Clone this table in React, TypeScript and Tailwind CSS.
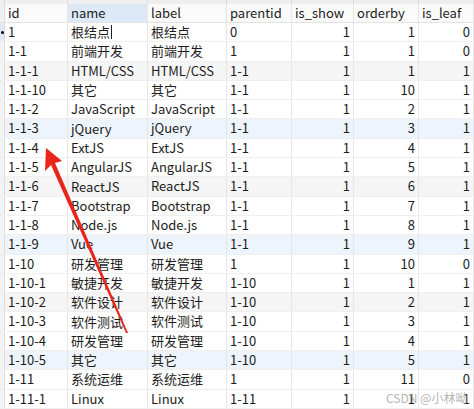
import React from "react";

type Row = [string, string, string, string, number, number, number];

const rows: Row[] = [
  ["1", "根结点", "根结点", "0", 1, 1, 0],
  ["1-1", "前端开发", "前端开发", "1", 1, 1, 0],
  ["1-1-1", "HTML/CSS", "HTML/CSS", "1-1", 1, 1, 1],
  ["1-1-10", "其它", "其它", "1-1", 1, 10, 1],
  ["1-1-2", "JavaScript", "JavaScript", "1-1", 1, 2, 1],
  ["1-1-3", "jQuery", "jQuery", "1-1", 1, 3, 1],
  ["1-1-4", "ExtJS", "ExtJS", "1-1", 1, 4, 1],
  ["1-1-5", "AngularJS", "AngularJS", "1-1", 1, 5, 1],
  ["1-1-6", "ReactJS", "ReactJS", "1-1", 1, 6, 1],
  ["1-1-7", "Bootstrap", "Bootstrap", "1-1", 1, 7, 1],
  ["1-1-8", "Node.js", "Node.js", "1-1", 1, 8, 1],
  ["1-1-9", "Vue", "Vue", "1-1", 1, 9, 1],
  ["1-10", "研发管理", "研发管理", "1", 1, 10, 0],
  ["1-10-1", "敏捷开发", "敏捷开发", "1-10", 1, 1, 1],
  ["1-10-2", "软件设计", "软件设计", "1-10", 1, 2, 1],
  ["1-10-3", "软件测试", "软件测试", "1-10", 1, 3, 1],
  ["1-10-4", "研发管理", "研发管理", "1-10", 1, 4, 1],
  ["1-10-5", "其它", "其它", "1-10", 1, 5, 1],
  ["1-11", "系统运维", "系统运维", "1", 1, 11, 0],
  ["1-11-1", "Linux", "Linux", "1-11", 1, 1, 1],
];

const cols = "grid grid-cols-[5px_63px_80px_79px_65px_62px_65px_55px]";
const cell = "border-r border-[#e6e6e6] px-[3px] truncate";

function rowBg(i: number) {
  if (i % 6 === 2) return "bg-[#f5f5f5]";
  if (i % 6 === 5) return "bg-[#eef4fb]";
  return "bg-white";
}

export default function App() {
  return (
    <div
      className="relative h-[409px] w-[474px] overflow-hidden bg-white text-[13px] text-[#1c1c1c]"
      style={{ fontFamily: '"Noto Sans CJK SC", "Noto Sans", sans-serif' }}
    >
      <div className={`${cols} h-[4px] bg-[#efefef]`}>
        {Array.from({ length: 8 }).map((_, i) => (
          <div key={i} className="border-r border-[#dcdcdc]" />
        ))}
      </div>

      <div className={`${cols} h-[19px] items-stretch border-b border-[#e3e3e3] bg-[#fafafa] leading-[18px]`}>
        <div className="border-r border-[#dcdcdc] bg-[#f0f0f0]" />
        <div className={cell}>id</div>
        <div className={`${cell} bg-[#dde9f7]`}>name</div>
        <div className={cell}>label</div>
        <div className={cell}>parentid</div>
        <div className={cell}>is_show</div>
        <div className={cell}>orderby</div>
        <div className={cell}>is_leaf</div>
      </div>

      {rows.map((r, i) => (
        <div
          key={r[0]}
          className={`${cols} h-[19.3px] border-b border-[#efefef] leading-[18px] ${rowBg(i)}`}
        >
          <div className={`flex items-center border-r border-[#dcdcdc] ${i === 0 ? "bg-[#dfe9f5]" : "bg-[#f3f3f3]"}`}>
            {i === 0 && <span className="ml-[1px] h-[3px] w-[3px] rounded-full bg-black" />}
          </div>
          <div className={cell}>{r[0]}</div>
          <div className={`${cell} flex items-center`}>
            {r[1]}
            {i === 0 && <span className="ml-[1px] h-[14px] w-px bg-[#222]" />}
          </div>
          <div className={cell}>{r[2]}</div>
          <div className={cell}>{r[3]}</div>
          <div className={`${cell} text-right`}>{r[4]}</div>
          <div className={`${cell} text-right`}>{r[5]}</div>
          <div className={`${cell} text-right`}>{r[6]}</div>
        </div>
      ))}

      {/* red arrow annotation */}
      <svg className="pointer-events-none absolute left-0 top-0" width="474" height="409">
        <polygon points="46,148 62,161 55,163 128,333 126,333 51,165 45,171" fill="#e8261c" />
      </svg>

      <div className="pointer-events-none absolute left-[386px] top-[389px] text-[12px] text-[#a0a0a0]/80">
        CSDN @小林呦
      </div>
    </div>
  );
}
